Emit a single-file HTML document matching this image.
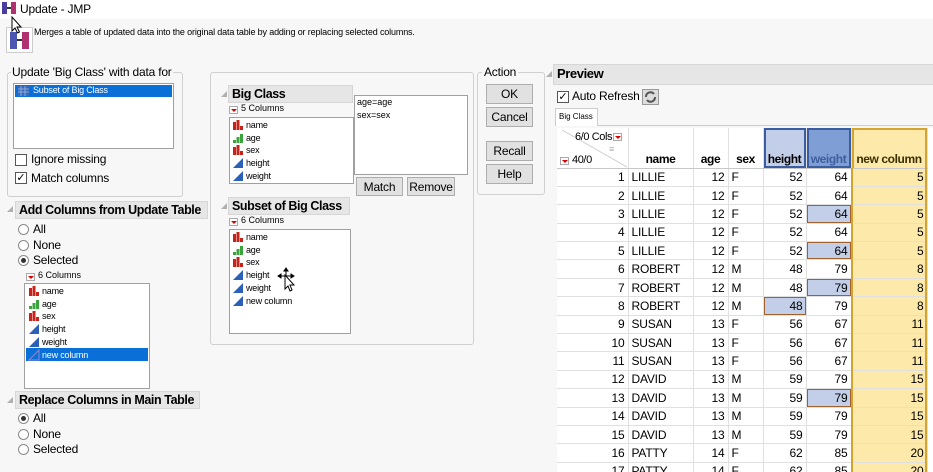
<!DOCTYPE html>
<html style="width:933px;height:472px;overflow:hidden"><head><meta charset="utf-8"><style>
*{box-sizing:border-box;margin:0;padding:0}
body{width:933px;height:472px;overflow:hidden;background:#f7f7f7;font-family:"Liberation Sans",sans-serif;font-size:12px;color:#000;position:relative}
.a{position:absolute}
.t{position:absolute;white-space:nowrap}
.box{position:absolute;background:#fff;border:1px solid #a0a0a0}
.grp{position:absolute;border:1px solid #d0d0d0;border-radius:3px}
.hdr{position:absolute;background:#e6e6e6;border:1px solid #d6d6d6;font-weight:bold;font-size:12.5px;letter-spacing:-0.4px;padding:1px 3px;white-space:nowrap;overflow:hidden}
.tri{position:absolute;width:0;height:0;border-left:6px solid transparent;border-bottom:6px solid #b0b0b0}
.btn{position:absolute;background:#e1e1e1;border:1px solid #adadad;text-align:center;font-size:12px;line-height:18px;letter-spacing:-0.2px}
.li{position:absolute;font-size:9px;letter-spacing:-0.2px;white-space:nowrap;height:12px;line-height:12px}
.li svg{position:absolute;left:0;top:0}
.li span{position:absolute;left:14px}
.rad{position:absolute;width:11px;height:11px;border:1px solid #8a8a8a;border-radius:50%;background:#fff}
.rad.on::after{content:"";position:absolute;left:2px;top:2px;width:5px;height:5px;border-radius:50%;background:#333}
.chk{position:absolute;width:12px;height:12px;border:1px solid #555;background:#fff;font-size:11px;line-height:10px;text-align:center}
.dd{position:absolute;width:9px;height:8px;border:1px solid #aaa;background:#fff}
.dd::after{content:"";position:absolute;left:1px;top:2px;border-left:3px solid transparent;border-right:3px solid transparent;border-top:3px solid #d00}
.lbl{font-size:12px;letter-spacing:-0.2px}
table{border-collapse:collapse;table-layout:fixed;position:absolute;left:557px;top:128px;width:370px;font-size:12px;letter-spacing:-0.2px}
td{height:18.4px;border-right:1px solid #e0e0e0;border-bottom:1px solid #e0e0e0;padding:0 3px;white-space:nowrap;overflow:hidden}
td.r{text-align:right}
td.rn{text-align:right;background:#fff}
th{height:40px;vertical-align:bottom;font-weight:bold;font-size:12px;letter-spacing:-0.4px;border-right:1px solid #e0e0e0;border-bottom:1px solid #c8c8c8;padding:0 1px 2px;text-align:center;white-space:nowrap;overflow:hidden}
.nc{background:#fde9a9}
.hl{background:#c3cfe8;box-shadow:inset 0 0 0 1px #a0612d}
</style></head><body>
<svg width="0" height="0" style="position:absolute"><defs>
<symbol id="nom" viewBox="0 0 12 12"><rect x="1" y="3" width="3" height="8" fill="#c8221a"/><rect x="4.5" y="1" width="3" height="10" fill="#c8221a"/><rect x="8" y="7" width="3" height="4" fill="#c8221a"/></symbol>
<symbol id="ord" viewBox="0 0 12 12"><rect x="1" y="8" width="3" height="3" fill="#3aa53a"/><rect x="4.5" y="5" width="3" height="6" fill="#3aa53a"/><rect x="8" y="2" width="3" height="9" fill="#3aa53a"/></symbol>
<symbol id="con" viewBox="0 0 12 12"><path d="M1 11 L11 1 L11 11 Z" fill="#2b5fb8"/></symbol>
</defs></svg>
<div class="a" style="left:0;top:0;width:933px;height:19px;background:#fff"></div>
<svg class="a" style="left:2px;top:2px" width="14" height="12"><rect x="0" y="0" width="5" height="12" fill="#4a3ea0"/><rect x="9" y="0" width="5" height="12" fill="#b03070"/><rect x="5" y="5" width="4" height="2" fill="#333"/></svg>
<div class="t" style="left:20px;top:2px;font-size:12px;letter-spacing:-0.2px">Update - JMP</div>
<div class="a" style="left:6px;top:27px;width:27px;height:26px;border:1px solid #ccc;background:#fff"></div>
<svg class="a" style="left:10px;top:32px" width="19" height="17"><rect x="0" y="0" width="7" height="17" fill="#4a56b0"/><rect x="12" y="0" width="7" height="17" fill="#b03070"/><rect x="7" y="7" width="5" height="2" fill="#333"/></svg>
<div class="t" style="left:34px;top:27px;font-size:9px;letter-spacing:-0.15px">Merges a table of updated data into the original data table by adding or replacing selected columns.</div>

<!-- left -->
<div class="grp" style="left:7px;top:72px;width:176px;height:125px"></div>
<div class="t lbl" style="left:11px;top:65px;background:#f7f7f7;padding:0 1px">Update 'Big Class' with data for</div>
<div class="box" style="left:13px;top:83px;width:161px;height:66px"></div>
<div class="a" style="left:15px;top:85px;width:157px;height:12px;background:#0a6fd6"></div>
<svg class="a" style="left:18px;top:86px" width="11" height="10"><rect width="11" height="10" fill="#3a6ab8"/><path d="M0 3H11M0 6H11M3 0V10M7 0V10" stroke="#9bb8e8" stroke-width="0.8"/></svg>
<div class="t" style="left:33px;top:85px;font-size:9px;letter-spacing:-0.2px;color:#fff">Subset of Big Class</div>
<div class="chk" style="left:15px;top:154px"></div><div class="t lbl" style="left:31px;top:152px">Ignore missing</div>
<div class="chk" style="left:15px;top:172px">✓</div><div class="t lbl" style="left:31px;top:171px">Match columns</div>
<div class="tri" style="left:7px;top:206px"></div>
<div class="hdr" style="left:15px;top:201px;width:193px">Add Columns from Update Table</div>
<div class="rad" style="left:18px;top:224px"></div><div class="t lbl" style="left:33px;top:222px">All</div>
<div class="rad" style="left:18px;top:240px"></div><div class="t lbl" style="left:33px;top:238px">None</div>
<div class="rad on" style="left:18px;top:255px"></div><div class="t lbl" style="left:33px;top:253px">Selected</div>
<div class="dd" style="left:26px;top:273px"></div><div class="t" style="left:38px;top:270px;font-size:9px">6 Columns</div>
<div class="box" style="left:24px;top:283px;width:126px;height:106px"></div>
<div class="a" style="left:26px;top:348px;width:122px;height:13px;background:#0a6fd6"></div>
<div class="li" style="left:28px;top:285px"><svg width="12" height="12"><use href="#nom"/></svg><span>name</span></div>
<div class="li" style="left:28px;top:298px"><svg width="12" height="12"><use href="#ord"/></svg><span>age</span></div>
<div class="li" style="left:28px;top:310px"><svg width="12" height="12"><use href="#nom"/></svg><span>sex</span></div>
<div class="li" style="left:28px;top:323px"><svg width="12" height="12"><use href="#con"/></svg><span>height</span></div>
<div class="li" style="left:28px;top:336px"><svg width="12" height="12"><use href="#con"/></svg><span>weight</span></div>
<div class="li" style="left:28px;top:349px;color:#fff"><svg width="12" height="12"><path d="M1 11 L11 1 L11 11 Z" fill="none" stroke="#8a8ad0"/></svg><span>new column</span></div>
<div class="tri" style="left:7px;top:397px"></div>
<div class="hdr" style="left:15px;top:391px;width:185px">Replace Columns in Main Table</div>
<div class="rad on" style="left:18px;top:413px"></div><div class="t lbl" style="left:33px;top:411px">All</div>
<div class="rad" style="left:18px;top:429px"></div><div class="t lbl" style="left:33px;top:427px">None</div>
<div class="rad" style="left:18px;top:444px"></div><div class="t lbl" style="left:33px;top:442px">Selected</div>

<!-- middle -->
<div class="grp" style="left:210px;top:72px;width:264px;height:273px"></div>
<div class="tri" style="left:221px;top:91px"></div>
<div class="hdr" style="left:228px;top:85px;width:125px">Big Class</div>
<div class="dd" style="left:229px;top:106px"></div><div class="t" style="left:241px;top:103px;font-size:9px">5 Columns</div>
<div class="box" style="left:229px;top:117px;width:125px;height:67px"></div>
<div class="li" style="left:232px;top:119px"><svg width="12" height="12"><use href="#nom"/></svg><span>name</span></div>
<div class="li" style="left:232px;top:132px"><svg width="12" height="12"><use href="#ord"/></svg><span>age</span></div>
<div class="li" style="left:232px;top:144px"><svg width="12" height="12"><use href="#nom"/></svg><span>sex</span></div>
<div class="li" style="left:232px;top:157px"><svg width="12" height="12"><use href="#con"/></svg><span>height</span></div>
<div class="li" style="left:232px;top:170px"><svg width="12" height="12"><use href="#con"/></svg><span>weight</span></div>
<div class="box" style="left:354px;top:95px;width:114px;height:80px"></div>
<div class="t" style="left:357px;top:97px;font-size:9px">age=age</div>
<div class="t" style="left:357px;top:110px;font-size:9px">sex=sex</div>
<div class="btn" style="left:356px;top:177px;width:47px;height:19px">Match</div>
<div class="btn" style="left:407px;top:177px;width:48px;height:19px">Remove</div>
<div class="tri" style="left:221px;top:203px"></div>
<div class="hdr" style="left:228px;top:197px;width:122px">Subset of Big Class</div>
<div class="dd" style="left:229px;top:218px"></div><div class="t" style="left:241px;top:215px;font-size:9px">6 Columns</div>
<div class="box" style="left:229px;top:229px;width:122px;height:105px"></div>
<div class="li" style="left:232px;top:231px"><svg width="12" height="12"><use href="#nom"/></svg><span>name</span></div>
<div class="li" style="left:232px;top:244px"><svg width="12" height="12"><use href="#ord"/></svg><span>age</span></div>
<div class="li" style="left:232px;top:256px"><svg width="12" height="12"><use href="#nom"/></svg><span>sex</span></div>
<div class="li" style="left:232px;top:269px"><svg width="12" height="12"><use href="#con"/></svg><span>height</span></div>
<div class="li" style="left:232px;top:282px"><svg width="12" height="12"><use href="#con"/></svg><span>weight</span></div>
<div class="li" style="left:232px;top:295px"><svg width="12" height="12"><use href="#con"/></svg><span>new column</span></div>
<svg class="a" style="left:276px;top:266px" width="20" height="26"><path d="M10 2V18M2 10H18M10 2l-2 3h4zM2 10l3-2v4zM18 10l-3-2v4z" stroke="#000" fill="#000" stroke-width="1"/><path d="M9 9V23l3-3 2 5 2-1-2-5h4z" fill="#fff" stroke="#000"/></svg>

<!-- action -->
<div class="grp" style="left:477px;top:72px;width:68px;height:123px"></div>
<div class="t lbl" style="left:482px;top:65px;background:#f7f7f7;padding:0 2px">Action</div>
<div class="btn" style="left:486px;top:84px;width:47px;height:20px">OK</div>
<div class="btn" style="left:486px;top:107px;width:47px;height:20px">Cancel</div>
<div class="btn" style="left:486px;top:141px;width:47px;height:20px">Recall</div>
<div class="btn" style="left:486px;top:164px;width:47px;height:20px">Help</div>

<!-- preview -->
<div class="tri" style="left:546px;top:71px"></div>
<div class="hdr" style="left:553px;top:64px;width:385px;height:21px;font-size:13px">Preview</div>
<div class="chk" style="left:557px;top:91px">✓</div><div class="t lbl" style="left:572px;top:89px">Auto Refresh</div>
<div class="a" style="left:642px;top:89px;width:17px;height:16px;background:#ddd;border:1px solid #999"><svg width="15" height="14"><path d="M3 7a4.5 4.5 0 0 1 8-3M12 7a4.5 4.5 0 0 1-8 3" stroke="#555" stroke-width="2" fill="none"/></svg></div>
<div class="a" style="left:555px;top:125px;width:378px;height:1px;background:#ccc"></div>
<div class="a" style="left:555px;top:108px;width:43px;height:18px;background:#fff;border:1px solid #ccc;border-bottom:none;font-size:8px;padding:3px 3px;white-space:nowrap;overflow:hidden">Big Class</div>
<div class="a" style="left:557px;top:128px;width:376px;height:344px;background:#fff"></div>
<table>
<colgroup><col style="width:71px"><col style="width:65px"><col style="width:35px"><col style="width:35px"><col style="width:43px"><col style="width:45px"><col style="width:76px"></colgroup>
<tr><th style="position:relative"><svg class="a" style="left:0;top:0" width="71" height="40"><path d="M5 2L70 39" stroke="#ccc"/></svg><span class="a" style="left:18px;top:3px;font-weight:normal;font-size:11px">6/0 Cols</span><div class="dd" style="left:56px;top:5px"></div><span class="a" style="left:52px;top:16px;color:#aaa;font-size:9px;font-weight:normal">≡</span><div class="dd" style="left:3px;top:29px"></div><span class="a" style="left:15px;top:26px;font-weight:normal;font-size:11px">40/0</span></th>
<th>name</th><th>age</th><th>sex</th>
<th style="background:#c3cfe8;box-shadow:inset 0 0 0 2px #3a5da0">height</th>
<th style="background:#7f9ed6;box-shadow:inset 0 0 0 2px #3a5da0;color:#3d5f9e">weight</th>
<th style="background:#fde9a9;box-shadow:inset 2px 2px 0 #d4a430,inset -2px 0 0 #d4a430;color:#3a3000">new column</th></tr>
<tr><td class="rn">1</td><td>LILLIE</td><td class="r">12</td><td>F</td><td class="r">52</td><td class="r">64</td><td class="r nc">5</td></tr>
<tr><td class="rn">2</td><td>LILLIE</td><td class="r">12</td><td>F</td><td class="r">52</td><td class="r">64</td><td class="r nc">5</td></tr>
<tr><td class="rn">3</td><td>LILLIE</td><td class="r">12</td><td>F</td><td class="r">52</td><td class="r hl">64</td><td class="r nc">5</td></tr>
<tr><td class="rn">4</td><td>LILLIE</td><td class="r">12</td><td>F</td><td class="r">52</td><td class="r">64</td><td class="r nc">5</td></tr>
<tr><td class="rn">5</td><td>LILLIE</td><td class="r">12</td><td>F</td><td class="r">52</td><td class="r hl">64</td><td class="r nc">5</td></tr>
<tr><td class="rn">6</td><td>ROBERT</td><td class="r">12</td><td>M</td><td class="r">48</td><td class="r">79</td><td class="r nc">8</td></tr>
<tr><td class="rn">7</td><td>ROBERT</td><td class="r">12</td><td>M</td><td class="r">48</td><td class="r hl">79</td><td class="r nc">8</td></tr>
<tr><td class="rn">8</td><td>ROBERT</td><td class="r">12</td><td>M</td><td class="r hl">48</td><td class="r">79</td><td class="r nc">8</td></tr>
<tr><td class="rn">9</td><td>SUSAN</td><td class="r">13</td><td>F</td><td class="r">56</td><td class="r">67</td><td class="r nc">11</td></tr>
<tr><td class="rn">10</td><td>SUSAN</td><td class="r">13</td><td>F</td><td class="r">56</td><td class="r">67</td><td class="r nc">11</td></tr>
<tr><td class="rn">11</td><td>SUSAN</td><td class="r">13</td><td>F</td><td class="r">56</td><td class="r">67</td><td class="r nc">11</td></tr>
<tr><td class="rn">12</td><td>DAVID</td><td class="r">13</td><td>M</td><td class="r">59</td><td class="r">79</td><td class="r nc">15</td></tr>
<tr><td class="rn">13</td><td>DAVID</td><td class="r">13</td><td>M</td><td class="r">59</td><td class="r hl">79</td><td class="r nc">15</td></tr>
<tr><td class="rn">14</td><td>DAVID</td><td class="r">13</td><td>M</td><td class="r">59</td><td class="r">79</td><td class="r nc">15</td></tr>
<tr><td class="rn">15</td><td>DAVID</td><td class="r">13</td><td>M</td><td class="r">59</td><td class="r">79</td><td class="r nc">15</td></tr>
<tr><td class="rn">16</td><td>PATTY</td><td class="r">14</td><td>F</td><td class="r">62</td><td class="r">85</td><td class="r nc">20</td></tr>
<tr><td class="rn">17</td><td>PATTY</td><td class="r">14</td><td>F</td><td class="r">62</td><td class="r">85</td><td class="r nc">20</td></tr>
</table>
<div class="a" style="left:851px;top:168px;width:76px;height:304px;border-left:2px solid #d4a430;border-right:2px solid #d4a430"></div>
<svg class="a" style="left:11px;top:16px" width="14" height="20"><path d="M1 1V15l3-3 2.5 5 2-1-2.5-5H10z" fill="#fff" stroke="#000"/></svg>
</body></html>
